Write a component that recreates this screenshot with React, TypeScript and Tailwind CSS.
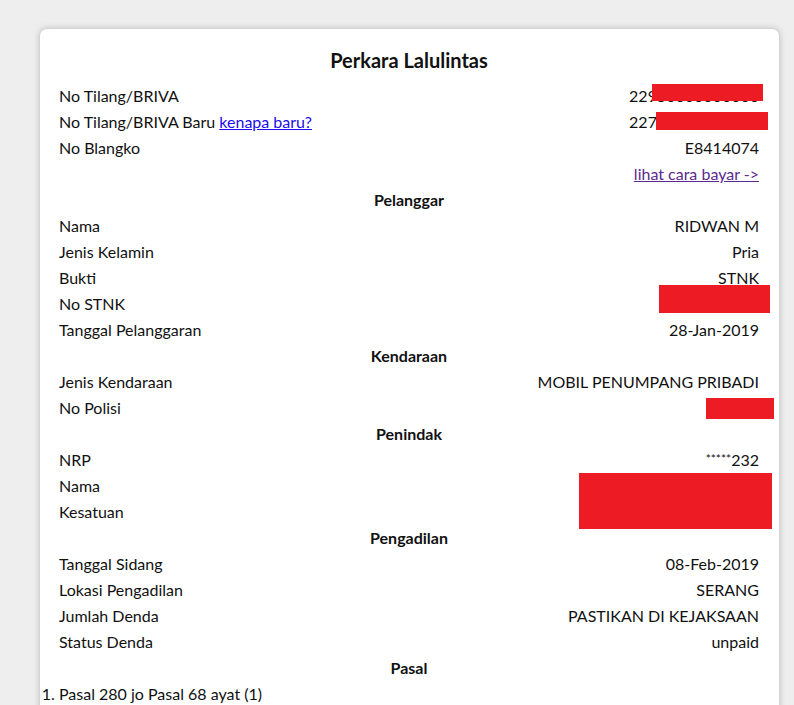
import React from "react";

type Row = { label: React.ReactNode; value: React.ReactNode };

const font = { fontFamily: "Lato, 'Noto Sans', sans-serif" };

function InfoRow({ label, value }: Row) {
  return (
    <div className="flex h-[26px] items-center justify-between text-[16px] text-[#111]">
      <span>{label}</span>
      <span className="text-right">{value}</span>
    </div>
  );
}

function SectionTitle({ children }: { children: React.ReactNode }) {
  return (
    <div className="flex h-[26px] items-center justify-center text-[16px] font-bold text-[#111]">
      {children}
    </div>
  );
}

export default function App() {
  return (
    <div className="min-h-screen bg-[#eeeeee] pl-[39px] pt-[28px]" style={font}>
      <div className="relative w-[741px] rounded-lg border border-[#d4d4d4] bg-white pb-6 pl-[19px] pr-5 pt-[17px] shadow-[0_0_6px_rgba(0,0,0,0.18)]">
        <h1 className="mb-[9px] h-[28px] text-center text-[20px] font-bold leading-[28px] text-[#111]">
          Perkara Lalulintas
        </h1>

        <InfoRow label="No Tilang/BRIVA" value="22950000000000" />
        <InfoRow
          label={
            <>
              No Tilang/BRIVA Baru{" "}
              <a href="#" className="text-[#1a0dee] underline">
                kenapa baru?
              </a>
            </>
          }
          value="22760000000000"
        />
        <InfoRow label="No Blangko" value="E8414074" />
        <div className="flex h-[26px] items-center justify-end text-[16px]">
          <a href="#" className="text-[#5b2a8e] underline">
            lihat cara bayar -&gt;
          </a>
        </div>

        <SectionTitle>Pelanggar</SectionTitle>
        <InfoRow label="Nama" value="RIDWAN M" />
        <InfoRow label="Jenis Kelamin" value="Pria" />
        <InfoRow label="Bukti" value="STNK" />
        <InfoRow label="No STNK" value="" />
        <InfoRow label="Tanggal Pelanggaran" value="28-Jan-2019" />

        <SectionTitle>Kendaraan</SectionTitle>
        <InfoRow label="Jenis Kendaraan" value="MOBIL PENUMPANG PRIBADI" />
        <InfoRow label="No Polisi" value="" />

        <SectionTitle>Penindak</SectionTitle>
        <InfoRow
          label="NRP"
          value={
            <>
              <span className="align-[3px] text-[12px]">*****</span>232
            </>
          }
        />
        <InfoRow label="Nama" value="" />
        <InfoRow label="Kesatuan" value="" />

        <SectionTitle>Pengadilan</SectionTitle>
        <InfoRow label="Tanggal Sidang" value="08-Feb-2019" />
        <InfoRow label="Lokasi Pengadilan" value="SERANG" />
        <InfoRow label="Jumlah Denda" value="PASTIKAN DI KEJAKSAAN" />
        <InfoRow label="Status Denda" value="unpaid" />

        <SectionTitle>Pasal</SectionTitle>
        <ol className="mt-[3px] list-outside list-decimal text-[16px] leading-[19px] text-[#111]">
          <li>
            Pasal 280 jo Pasal 68 ayat (1)
            <div className="font-bold">Bukti</div>
          </li>
        </ol>

        {/* redaction boxes */}
        <div className="absolute left-[612px] top-[55px] h-[17px] w-[111px] bg-[#ed1c24]" />
        <div className="absolute left-[616px] top-[83px] h-[18px] w-[112px] bg-[#ed1c24]" />
        <div className="absolute left-[619px] top-[256px] h-[28px] w-[111px] bg-[#ed1c24]" />
        <div className="absolute left-[666px] top-[369px] h-[21px] w-[68px] bg-[#ed1c24]" />
        <div className="absolute left-[539px] top-[444px] h-[56px] w-[193px] bg-[#ed1c24]" />
      </div>
    </div>
  );
}
